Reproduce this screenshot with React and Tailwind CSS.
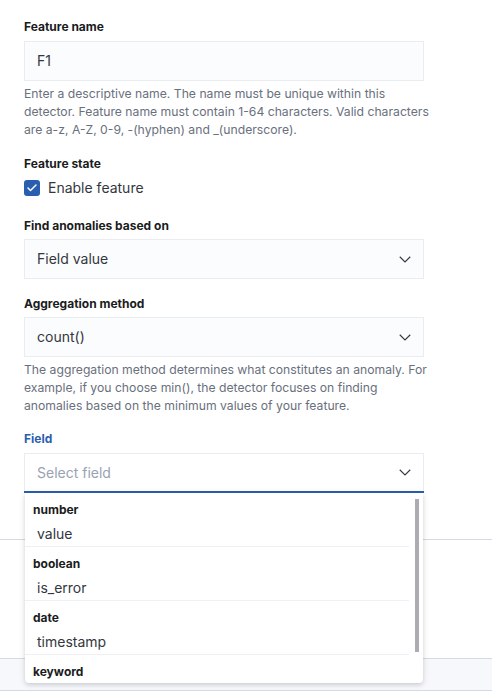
import { Check } from 'lucide-react'

const GROUPS = [
  { label: 'number', options: ['value'] },
  { label: 'boolean', options: ['is_error'] },
  { label: 'date', options: ['timestamp'] },
  { label: 'keyword', options: [] },
]

function Chevron() {
  return (
    <svg width="12" height="7" viewBox="0 0 12 7" fill="none" className="shrink-0">
      <polyline points="0.75,0.75 6,6 11.25,0.75" stroke="#343741" strokeWidth="1.1" />
    </svg>
  )
}

function Label({ children, active }) {
  return (
    <div className={`text-xs font-bold leading-4 ${active ? 'text-[#2a5fb0]' : 'text-[#1a1c21]'}`}>
      {children}
    </div>
  )
}

// lines broken where the reference breaks them
function Help({ lines }) {
  return (
    <p className="mt-1 w-[400px] whitespace-nowrap text-[12.2px] leading-[18px] text-[#69707d]">
      {lines.map((l, i) => (
        <span key={i} className="block">{l}</span>
      ))}
    </p>
  )
}

function SelectBox({ value }) {
  return (
    <div className="mt-[5px] flex h-10 w-[400px] items-center justify-between border border-[#e9ecf1] bg-[#fbfcfd] pl-3 pr-3 text-sm text-[#343741]">
      <span>{value}</span>
      <Chevron />
    </div>
  )
}

export default function App() {
  return (
    <div className="min-h-[697px] bg-white font-['Inter',sans-serif]">
      <div className="px-6 pt-[19px] pb-[46px]">
        {/* Feature name */}
        <Label>Feature name</Label>
        <div className="mt-[6px] flex h-10 w-[400px] items-center border border-[#e9ecf1] bg-[#fbfcfd] px-3 text-sm text-[#343741]">
          F1
        </div>
        <Help
          lines={[
            'Enter a descriptive name. The name must be unique within this',
            'detector. Feature name must contain 1-64 characters. Valid characters',
            'are a-z, A-Z, 0-9, -(hyphen) and _(underscore).',
          ]}
        />

        {/* Feature state */}
        <div className="mt-[17px]">
          <Label>Feature state</Label>
          <div className="mt-1 flex h-6 items-center gap-2">
            <div className="flex h-4 w-4 items-center justify-center rounded-[3px] bg-[#2a5fb0]">
              <Check className="h-3 w-3 text-white" strokeWidth={3} />
            </div>
            <span className="text-sm text-[#343741]">Enable feature</span>
          </div>
        </div>

        <div className="mt-[18px]">
          <Label>Find anomalies based on</Label>
          <SelectBox value="Field value" />
        </div>

        <div className="mt-[17px]">
          <Label>Aggregation method</Label>
          <SelectBox value="count()" />
          <Help
            lines={[
              'The aggregation method determines what constitutes an anomaly. For',
              'example, if you choose min(), the detector focuses on finding',
              'anomalies based on the minimum values of your feature.',
            ]}
          />
        </div>

        {/* Field with open combo box */}
        <div className="relative mt-4 w-[400px]">
          <Label active>Field</Label>
          <div className="mt-[6px] flex h-[38px] items-center justify-between border border-b-0 border-[#e9ecf1] bg-white pl-3 pr-3 text-sm">
            <span className="text-[#98a2b3]">Select field</span>
            <Chevron />
          </div>
          <div className="h-[2px] bg-[#2a5fb0]" />

          <div className="absolute left-px right-px top-full z-10 h-[190px] overflow-hidden rounded-b bg-white shadow-[0_2px_4px_rgba(0,0,0,0.12),0_1px_8px_rgba(0,0,0,0.08)]">
            <div className="mr-[14px]">
              {GROUPS.map(g => (
                <div key={g.label} className={g.options.length ? 'border-b border-[#eef0f4]' : ''}>
                  <div className="px-2 pt-[7px] pb-px text-xs font-bold leading-5 text-[#1a1c21]">{g.label}</div>
                  {g.options.map(o => (
                    <div key={o} className="h-[25px] pl-3 text-sm leading-[25px] text-[#343741]">{o}</div>
                  ))}
                </div>
              ))}
            </div>
            <div className="absolute right-1 top-[6px] h-[153px] w-1 bg-[#abadb3]" />
          </div>
        </div>
      </div>

      {/* flyout footer */}
      <div className="border-t border-[#d3dae6]">
        <div className="h-[118px]" />
        <div className="h-[33px] border-y border-[#d3dae6] bg-[#f7f8fc]" />
      </div>
    </div>
  )
}
